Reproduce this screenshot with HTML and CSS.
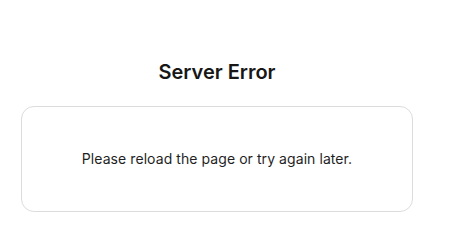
FILE: index.html
```html
<!DOCTYPE html>
<html>
<head>
<meta charset="utf-8">
<link rel="stylesheet" href="styles.css">
</head>
<body>
<main class="wrap">
  <h1 class="title">Server Error</h1>
  <div class="card">
    <p class="msg">Please reload the page or try again later.</p>
  </div>
</main>
</body>
</html>
```
FILE: styles.css
```css
html, body { margin: 0; padding: 0; background: #fff; }
body { font-family: Inter, "Noto Sans", sans-serif; color: #1a1a1a; }
.wrap {
  width: 434px;
  box-sizing: border-box;
  padding: 58px 21px 0;
  display: flex;
  flex-direction: column;
  align-items: stretch;
}
.title {
  margin: 0;
  text-align: center;
  font-size: 20px;
  font-weight: 600;
  line-height: 28px;
  letter-spacing: 0;
  color: #171717;
}
.card {
  margin-top: 20px;
  height: 106px;
  box-sizing: border-box;
  border: 1px solid #dcdcdc;
  border-radius: 13px;
  display: flex;
  align-items: center;
  justify-content: center;
}
.msg {
  margin: 0;
  font-size: 14px;
  line-height: 20px;
  letter-spacing: 0.07px;
  color: #1f1f1f;
}
```
